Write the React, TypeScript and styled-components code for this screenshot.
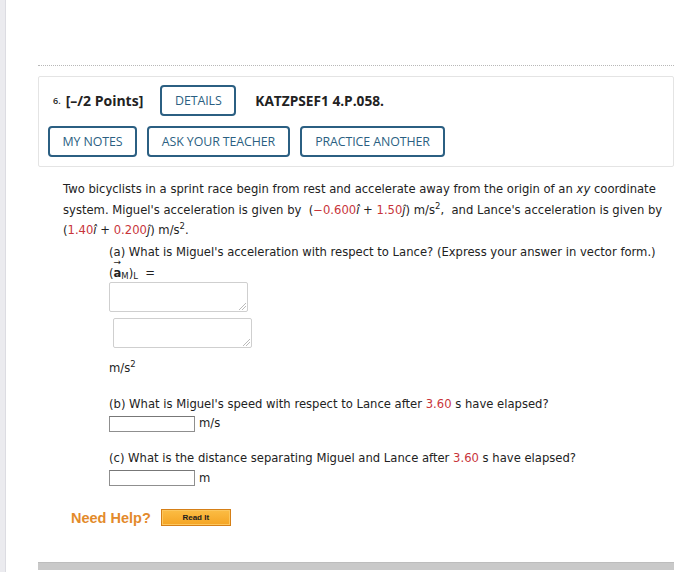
import React from "react";
import styled, { createGlobalStyle } from "styled-components";

const Global = createGlobalStyle`
  html, body { margin: 0; padding: 0; background: #fff; }
  body { width: 700px; height: 572px; overflow: hidden; }
`;

const Page = styled.div`
  display: flex;
  width: 700px;
  height: 572px;
  background: #fff;
`;

const SideStrip = styled.div`
  width: 5px;
  flex: none;
  background: #ebebef;
  border-right: 1px solid #dcdce2;
`;

const Main = styled.div`
  flex: 1;
  padding: 65px 0 0 32px;
  width: 636px;
`;

const Column = styled.div`
  width: 636px;
  display: flex;
  flex-direction: column;
`;

const Dotted = styled.div`
  height: 0;
  border-top: 1px dotted #b8b8b8;
  margin-bottom: 10px;
`;

const QuestionBox = styled.div`
  border: 1px solid #e4e4e4;
  border-radius: 2px;
  padding: 8px 9px 9px 9px;
  display: flex;
  flex-direction: column;
  gap: 10px;
`;

const HeaderRow = styled.div`
  display: flex;
  align-items: center;
  font-family: "Open Sans", "Liberation Sans", sans-serif;
  color: #222;
`;

const Num = styled.span`
  font-size: 9px;
  font-weight: 600;
  margin: 0 5px 0 5px;
`;

const Points = styled.span`
  font-size: 14px;
  font-weight: 700;
  margin-right: 17px;
`;

const Code = styled.span`
  font-size: 13.7px;
  font-weight: 700;
  margin-left: 19px;
`;

const OutlineButton = styled.div<{ $w: number }>`
  width: ${(p) => p.$w}px;
  height: 31px;
  box-sizing: border-box;
  border: 2px solid #2b5f82;
  border-radius: 4px;
  display: flex;
  align-items: center;
  justify-content: center;
  font-family: "Open Sans", "Liberation Sans", sans-serif;
  font-size: 12.4px;
  font-weight: 500;
  color: #2b5f82;
  letter-spacing: -0.1px;
`;

const ButtonRow = styled.div`
  display: flex;
  gap: 10px;
`;

const Body = styled.div`
  padding: 12px 0 0 25px;
  font-family: "DejaVu Sans", Verdana, sans-serif;
  font-size: 11.6px;
  color: #222;
  line-height: 20.5px;
`;

const Para = styled.p`
  margin: 0;
  width: 630px;
  white-space: nowrap;
`;

const Red = styled.span`
  color: #c8343a;
`;

const Part = styled.div`
  padding-left: 46px;
  margin-top: 1px;
  white-space: nowrap;
`;

const VecLabel = styled.div`
  line-height: 18px;
  margin-top: 2px;
`;

const Arrow = styled.span`
  position: relative;
  display: inline-block;
  font-weight: 700;
  &::before {
    content: "→";
    position: absolute;
    left: 0px;
    top: -11px;
    font-size: 9px;
    font-weight: 400;
  }
`;

const Sub = styled.sub`
  font-size: 8.5px;
  vertical-align: -2px;
  line-height: 0;
`;

const Sup = styled.sup`
  font-size: 8.5px;
  vertical-align: 5px;
  line-height: 0;
`;

const AreaBox = styled.div<{ $offset: number }>`
  width: 139px;
  height: 30px;
  box-sizing: border-box;
  border: 1px solid #cfcfcf;
  border-radius: 2px;
  margin-left: ${(p) => p.$offset}px;
  position: relative;
  background: #fff;
  &::after {
    content: "";
    position: absolute;
    right: 1px;
    bottom: 1px;
    width: 7px;
    height: 7px;
    background: linear-gradient(135deg, transparent 45%, #bbb 46%, #bbb 52%, transparent 53%, transparent 70%, #bbb 71%, #bbb 77%, transparent 78%);
  }
`;

const Areas = styled.div`
  display: flex;
  flex-direction: column;
  gap: 6px;
  margin-top: 0px;
`;

const Unit = styled.div`
  margin-top: 10px;
`;

const Question = styled.div<{ $top: number }>`
  margin-top: ${(p) => p.$top}px;
`;

const AnswerRow = styled.div`
  display: flex;
  align-items: center;
  gap: 4px;
  margin-top: 1px;
  height: 17px;
`;

const SmallInput = styled.div`
  width: 86px;
  height: 16px;
  box-sizing: border-box;
  border: 1px solid #8f8f8f;
  border-top-color: #777;
`;

const Help = styled.div`
  display: flex;
  align-items: center;
  gap: 10px;
  margin: 21px 0 0 8px;
`;

const HelpText = styled.span`
  font-family: "Liberation Sans", Arial, sans-serif;
  font-size: 14.5px;
  font-weight: 700;
  color: #e38a2b;
`;

const ReadIt = styled.div`
  width: 70px;
  height: 17px;
  box-sizing: border-box;
  border: 1px solid #d57f17;
  background: linear-gradient(#fbbd45, #f5a423);
  box-shadow: inset 0 0 0 1px #fcc75e;
  display: flex;
  align-items: center;
  justify-content: center;
  font-family: "Liberation Sans", Arial, sans-serif;
  font-size: 8px;
  font-weight: 700;
  color: #1c1c1c;
`;

const BottomBar = styled.div`
  height: 7px;
  background: #c9c9c9;
  border-top: 1px solid #bdbdbd;
  margin-top: 34px;
`;

export default function App() {
  return (
    <>
      <Global />
      <Page>
        <SideStrip />
        <Main>
          <Column>
            <Dotted />
            <QuestionBox>
              <HeaderRow>
                <Num>6.</Num>
                <Points>[–/2 Points]</Points>
                <OutlineButton $w={76}>DETAILS</OutlineButton>
                <Code>KATZPSEF1 4.P.058.</Code>
              </HeaderRow>
              <ButtonRow>
                <OutlineButton $w={89}>MY NOTES</OutlineButton>
                <OutlineButton $w={143}>ASK YOUR TEACHER</OutlineButton>
                <OutlineButton $w={145}>PRACTICE ANOTHER</OutlineButton>
              </ButtonRow>
            </QuestionBox>
            <Body>
              <Para>
                Two bicyclists in a sprint race begin from rest and accelerate away from the origin of an <i>xy</i> coordinate
                <br />
                system. Miguel's acceleration is given by&nbsp; (<Red>−0.600</Red><i>î</i> + <Red>1.50</Red><i>ĵ</i>) m/s<Sup>2</Sup>,&nbsp; and Lance's acceleration is given by
                <br />
                (<Red>1.40</Red><i>î</i> + <Red>0.200</Red><i>ĵ</i>) m/s<Sup>2</Sup>.
              </Para>
              <Part>
                <div>(a) What is Miguel's acceleration with respect to Lance? (Express your answer in vector form.)</div>
                <VecLabel>
                  (<Arrow>a</Arrow><Sub>M</Sub>)<Sub>L</Sub>&nbsp; =
                </VecLabel>
                <Areas>
                  <AreaBox $offset={0} />
                  <AreaBox $offset={4} />
                </Areas>
                <Unit>
                  m/s<Sup>2</Sup>
                </Unit>
                <Question $top={15}>
                  (b) What is Miguel's speed with respect to Lance after <Red>3.60</Red> s have elapsed?
                </Question>
                <AnswerRow>
                  <SmallInput />
                  <span>m/s</span>
                </AnswerRow>
                <Question $top={16}>
                  (c) What is the distance separating Miguel and Lance after <Red>3.60</Red> s have elapsed?
                </Question>
                <AnswerRow>
                  <SmallInput />
                  <span>m</span>
                </AnswerRow>
              </Part>
              <Help>
                <HelpText>Need Help?</HelpText>
                <ReadIt>Read It</ReadIt>
              </Help>
            </Body>
            <BottomBar />
          </Column>
        </Main>
      </Page>
    </>
  );
}
